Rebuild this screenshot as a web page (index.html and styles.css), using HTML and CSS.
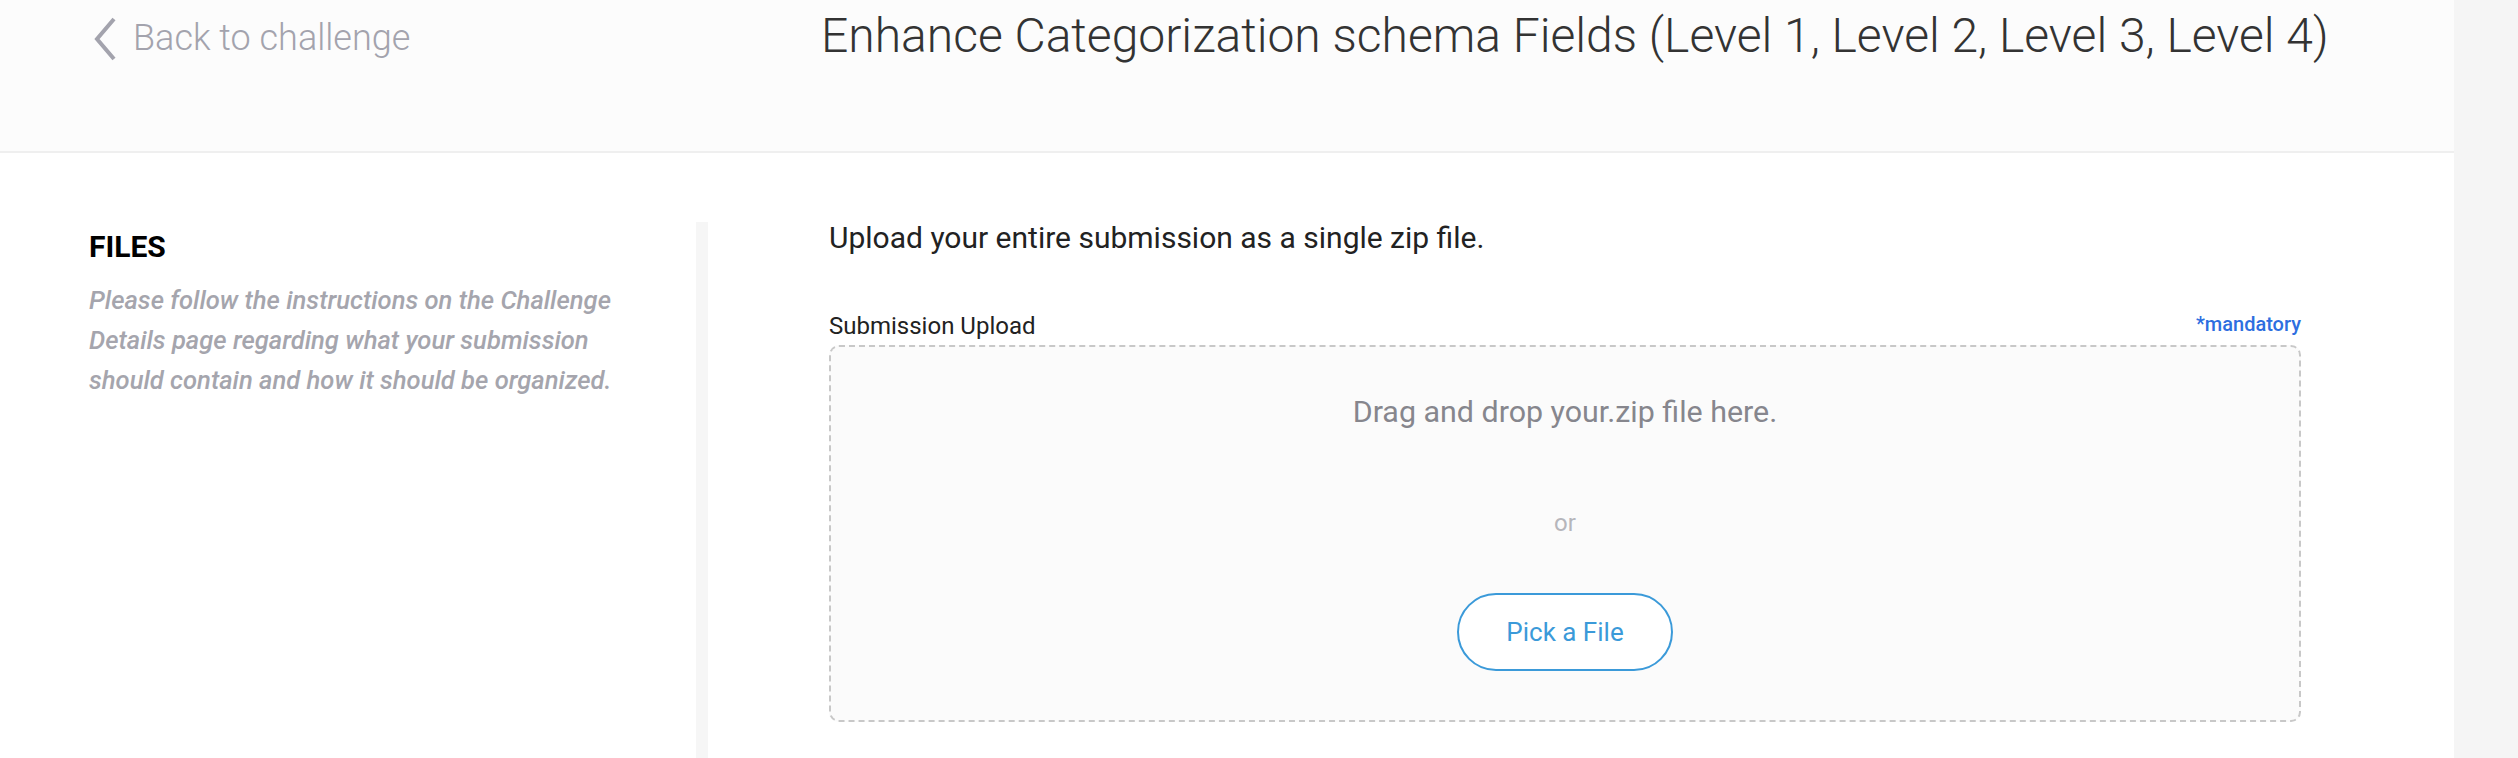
FILE: index.html
```html
<!DOCTYPE html>
<html lang="en">
<head>
<meta charset="utf-8">
<title>Submit</title>
<link rel="stylesheet" href="styles.css">
</head>
<body>
<div class="page">
  <div class="content">
    <header class="header">
      <a class="back" href="#">
        <svg class="back-icon" width="24" height="44" viewBox="0 0 24 44" aria-hidden="true">
          <polyline points="21,2 4,22 21,42" fill="none" stroke="#a3a3ad" stroke-width="4" stroke-linejoin="miter"/>
        </svg>
        <span class="back-text">Back to challenge</span>
      </a>
      <h1 class="title">Enhance Categorization schema Fields (Level 1, Level 2, Level 3, Level 4)</h1>
    </header>
    <section class="body">
      <aside class="sidebar">
        <h2 class="side-title">FILES</h2>
        <p class="side-text">Please follow the instructions on the Challenge Details page regarding what your submission should contain and how it should be organized.</p>
      </aside>
      <div class="divider"></div>
      <main class="main">
        <h3 class="main-title">Upload your entire submission as a single zip file.</h3>
        <div class="field-row">
          <span class="field-label">Submission Upload</span>
          <span class="mandatory">*mandatory</span>
        </div>
        <div class="dropzone">
          <p class="drop-text">Drag and drop your.zip file here.</p>
          <p class="drop-or">or</p>
          <button class="pick" type="button">Pick a File</button>
        </div>
      </main>
    </section>
  </div>
  <div class="rail"></div>
</div>
</body>
</html>
```

FILE: styles.css
```css
html, body {
  margin: 0;
  padding: 0;
  height: 100%;
}
body {
  font-family: Roboto, "Liberation Sans", Arial, sans-serif;
  background: #ffffff;
  color: #222;
}
.page {
  display: flex;
  min-height: 758px;
}
.content {
  flex: 1;
  display: flex;
  flex-direction: column;
}
.rail {
  width: 64px;
  background: #f5f5f5;
}
.header {
  display: grid;
  grid-template-columns: 821px 1fr;
  align-items: start;
  height: 143px;
  padding-top: 8px;
  background: #fcfcfc;
  border-bottom: 2px solid #efefef;
}
.back {
  display: flex;
  align-items: center;
  gap: 16px;
  margin-top: 6px;
  padding-left: 93px;
  text-decoration: none;
  color: #a3a3ad;
}
.back-icon {
  display: block;
  margin-top: 3px;
}
.back-text {
  font-size: 36px;
  font-weight: 300;
  line-height: 44px;
}
.title {
  margin: 0;
  font-size: 48px;
  font-weight: 300;
  line-height: 56px;
  color: #333;
  white-space: nowrap;
}
.body {
  flex: 1;
  display: flex;
  padding-top: 69px;
}
.sidebar {
  width: 607px;
  padding-left: 89px;
  padding-top: 7px;
}
.side-title {
  margin: 0;
  font-size: 30px;
  font-weight: 700;
  line-height: 36px;
  color: #000;
}
.side-text {
  max-width: 556px;
  margin: 15px 0 0;
  font-size: 25.6px;
  font-weight: 500;
  font-style: italic;
  line-height: 40px;
  color: #a5a5ad;
}
.divider {
  width: 12px;
  background: #f6f6f6;
}
.main {
  flex: 1;
  padding-left: 121px;
  padding-right: 153px;
}
.main-title {
  margin: 0;
  font-size: 30px;
  font-weight: 400;
  line-height: 32px;
  color: #222;
}
.field-row {
  display: flex;
  justify-content: space-between;
  align-items: flex-start;
  margin-top: 58px;
  margin-bottom: 5px;
}
.field-label {
  font-size: 24px;
  line-height: 28px;
  color: #222;
}
.mandatory {
  font-size: 20px;
  line-height: 24px;
  font-weight: 500;
  color: #2d6ee0;
}
.dropzone {
  display: flex;
  flex-direction: column;
  align-items: center;
  padding: 47px 0 49px;
  border: 2px dashed #c8c8c8;
  border-radius: 10px;
  background: #fbfbfb;
}
.drop-text {
  margin: 0;
  font-size: 30.4px;
  line-height: 36px;
  color: #86868d;
}
.drop-or {
  margin: 79px 0 0;
  font-size: 24px;
  line-height: 28px;
  color: #b6b6bb;
}
.pick {
  margin-top: 56px;
  width: 216px;
  height: 78px;
  border: 2px solid #3b9ad9;
  border-radius: 39px;
  background: #ffffff;
  color: #3b9ad9;
  font-family: Roboto, "Liberation Sans", Arial, sans-serif;
  font-size: 26px;
  line-height: 30px;
  cursor: pointer;
}
```
